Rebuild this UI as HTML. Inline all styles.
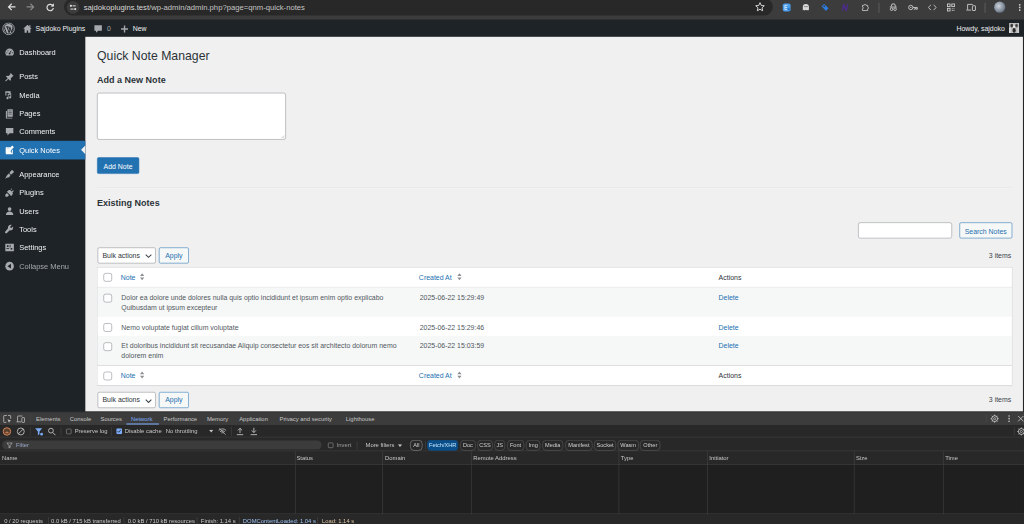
<!DOCTYPE html>
<html><head><meta charset="utf-8">
<style>
*{box-sizing:border-box}
html,body{margin:0;padding:0;width:1024px;height:524px;overflow:hidden;background:#262626}
body{font-family:"Liberation Sans",sans-serif}
#root{position:absolute;left:0;top:0;width:1920px;height:983px;transform:scale(0.533333);transform-origin:0 0;overflow:hidden}
/* chrome toolbar */
#chrome{position:absolute;left:0;top:0;width:1920px;height:37px;background:#3c3c3c}
#omni{position:absolute;left:120px;top:-3px;width:1328.6px;height:32px;border-radius:16px;background:#282828}
#omni .info{position:absolute;left:4.5px;top:4.5px;width:24px;height:24px;border-radius:12px;background:#3c3c3c}
#omni .url{position:absolute;left:37px;top:8.8px;font-size:14.4px;line-height:1;color:#d8d8d8;white-space:nowrap}
#omni .url span{color:#c4c4c4}
#chrome .ci{position:absolute}
#chrome .csep{position:absolute;top:5px;width:1.5px;height:19px;background:#5a5a5a}
#adminbar .ai{position:absolute}
#adminbar .at{position:absolute;top:9.9px;line-height:1;font-size:13px;white-space:nowrap}

/* wp admin bar */
#adminbar{position:absolute;left:0;top:37px;width:1920px;height:32px;background:#1d2327;color:#f0f0f1;font-size:13px}
#adminbar .it{position:absolute;top:0;height:32px;line-height:32px;white-space:nowrap}
/* sidebar */
#menu{position:absolute;left:0;top:69px;width:160px;height:703px;background:#1d2327}
#menu ul{list-style:none;margin:0;padding:12.4px 0 0;}
#menu li{position:relative;height:34.4px;}
#menu li.sep{height:11px}
#menu li .nm{position:absolute;left:36px;top:8px;font-size:14px;line-height:18px;color:#f0f0f1}
#menu li .ic{position:absolute;left:7.5px;top:7px}
#menu li.cur{background:#2271b1}
#menu li.cur .nm{color:#fff}
#menu li.cur:after{content:"";position:absolute;right:0;top:9px;border:8px solid transparent;border-right-color:#f0f0f1}
#menu li.col .nm{color:#a7aaad}
/* content */
#content{position:absolute;left:160px;top:69px;width:1758px;height:703px;background:#f0f0f1;color:#3c434a;font-size:13px;line-height:18.2px}
.wrap{position:absolute;left:22px;top:10px;width:1718px}
h1{font-size:23px;font-weight:400;margin:0;padding:9px 0 4px;line-height:29.9px;color:#1d2327}
h2{font-size:16.9px;font-weight:600;margin:16.9px 0;line-height:18.2px;color:#1d2327}

.t{position:absolute;white-space:nowrap;line-height:1;color:#3c434a}
.ta{position:absolute;background:#fff;border:1px solid #8c8f94;border-radius:4px}
.btnp{position:absolute;background:#2271b1;border:1px solid #2271b1;border-radius:3px;color:#fff;font-size:13px;text-align:center;line-height:28.7px;padding-top:3.2px}
.btns{position:absolute;background:#f6f7f7;border:1px solid #2271b1;border-radius:3px;color:#2271b1;font-size:13px;text-align:center;line-height:28px}
.inp{position:absolute;background:#fff;border:1px solid #8c8f94;border-radius:4px}
.sel{position:absolute;background:#fff;border:1px solid #8c8f94;border-radius:3px;color:#2c3338;font-size:13px}
.sel span{position:absolute;left:8px;top:7px;line-height:1;white-space:nowrap}
.tbl{position:absolute;background:#fff;border:1px solid #c3c4c7;box-shadow:0 1px 1px rgba(0,0,0,.04)}
.tbl .row{position:absolute;left:0;width:100%}
.tbl .hl{position:absolute;left:0;width:100%;height:1px;background:#c3c4c7}
.tbl .cb{position:absolute;width:16px;height:16px;border:1.4px solid #80848a;border-radius:4px;background:#fff}
.tbl .tt{position:absolute;font-size:13px;line-height:18.6px;color:#50575e;white-space:nowrap}
.tbl .tt.nt{white-space:normal;width:540px}
.tbl .lk{color:#2271b1}
.tbl .srt{position:absolute}
/* devtools */
#dev{position:absolute;left:0;top:771.6px;width:1920px;height:212px;background:#1f1f1f;color:#c7c7c7}
#dev .dr{position:absolute;left:0;width:100%}
#dev .dt{position:absolute;line-height:1;white-space:nowrap}
#dev .ds{position:absolute;width:1px}
#dev .di{position:absolute}
#dev .dcb{position:absolute;width:10px;height:10px;border:1.4px solid #9e9e9e;border-radius:2px}
#dev .chip{position:absolute;top:53.8px;height:20px;border:1.5px solid #5e5e5e;border-radius:7px;color:#d0d0d0;font-size:10.5px;line-height:19px;text-align:center;white-space:nowrap}
#dev .chip.sel2{background:#0b4f8a;border-color:#0b4f8a;color:#c2e7ff}
#dev .chip.all{border-color:#9a9a9a}

</style></head>
<body><div id="root">
<div id="chrome">
<svg class="ci" style="left:12px;top:4px" width="20" height="18" viewBox="0 0 20 18"><path d="M17 9H4M10 3L4 9l6 6" fill="none" stroke="#e3e3e3" stroke-width="2.2"/></svg>
<svg class="ci" style="left:47px;top:4px" width="20" height="18" viewBox="0 0 20 18"><path d="M3 9h13M10 3l6 6-6 6" fill="none" stroke="#8a8a8a" stroke-width="2.2"/></svg>
<svg class="ci" style="left:84px;top:3px" width="20" height="20" viewBox="0 0 20 20"><path d="M15.5 8.5A6 6 0 1 0 16 12" fill="none" stroke="#e3e3e3" stroke-width="2.2"/><path d="M17 3v6h-6z" fill="#e3e3e3"/></svg>
<div id="omni"><div class="info"><svg width="24" height="24" viewBox="0 0 24 24" style="position:absolute;left:0;top:0"><circle cx="8" cy="9" r="2" fill="#e3e3e3"/><path d="M11 9h6M7 15h6" stroke="#e3e3e3" stroke-width="1.8"/><circle cx="16" cy="15" r="2" fill="#e3e3e3"/></svg></div>
<div class="url">sajdokoplugins.test<span>/wp-admin/admin.php?page=qnm-quick-notes</span></div>
<svg style="position:absolute;left:1295px;top:6px" width="20" height="20" viewBox="0 0 20 20"><path d="M10 2l2.4 5.2 5.6.6-4.2 3.8 1.2 5.6L10 14.3 5 17.2l1.2-5.6L2 7.8l5.6-.6z" fill="none" stroke="#e3e3e3" stroke-width="1.7" stroke-linejoin="round"/></svg>
</div>
<svg class="ci" style="left:1466px;top:4.5px" width="18" height="18" viewBox="0 0 22 22"><rect x="2" y="2" width="18" height="18" rx="4" fill="#4a9be8"/><path d="M7 6h6M7 11h5M7 16h6M7 6v10" stroke="#d8ecff" stroke-width="2"/><circle cx="16" cy="15" r="3" fill="#2a78c8"/></svg>
<svg class="ci" style="left:1502px;top:4.5px" width="18" height="18" viewBox="0 0 22 22"><path d="M4 10a7 7 0 0 1 14 0v8l-2-2-2 2-3-2-3 2-2-2-2 2z" fill="#d9d9d9"/><circle cx="9" cy="9" r="1.6" fill="#555"/><circle cx="13.5" cy="9" r="1.6" fill="#555"/></svg>
<svg class="ci" style="left:1538px;top:4.5px" width="18" height="18" viewBox="0 0 22 22"><path d="M3 8l6-5 10 10-6 6z" fill="#2b7de0"/><circle cx="9" cy="8" r="2" fill="#3c3c3c"/></svg>
<svg class="ci" style="left:1575px;top:4.5px" width="18" height="18" viewBox="0 0 22 22"><path d="M4 19L7 3h3l4 9 2-9h3l-3 16h-3l-4-9-2 9z" fill="#4b2b8c"/></svg>
<svg class="ci" style="left:1613px;top:4.5px" width="18" height="18" viewBox="0 0 22 22"><path d="M5 6h4a2 2 0 0 1 4 0h4v4a2 2 0 0 1 0 4v4H5v-4a2 2 0 0 0 0-4z" fill="none" stroke="#d0d0d0" stroke-width="1.8"/></svg>
<div class="csep" style="left:1647px"></div>
<svg class="ci" style="left:1666px;top:4.5px" width="18" height="18" viewBox="0 0 22 22"><path d="M6 9l2-6h6l2 6M3 10h16" fill="none" stroke="#d0d0d0" stroke-width="2"/><circle cx="7" cy="15" r="3" fill="none" stroke="#d0d0d0" stroke-width="2"/><circle cx="15" cy="15" r="3" fill="none" stroke="#d0d0d0" stroke-width="2"/></svg>
<svg class="ci" style="left:1702px;top:4.5px" width="19.6" height="18" viewBox="0 0 24 22"><circle cx="7" cy="11" r="5" fill="none" stroke="#d0d0d0" stroke-width="2"/><circle cx="7" cy="11" r="1.5" fill="#d0d0d0"/><path d="M12 11h10v4h-3v-2h-2v2h-3" fill="none" stroke="#d0d0d0" stroke-width="2"/></svg>
<svg class="ci" style="left:1739px;top:4.5px" width="18" height="18" viewBox="0 0 22 22"><path d="M8 5l-6 6 6 6M14 5l6 6-6 6" fill="none" stroke="#d0d0d0" stroke-width="2"/></svg>
<svg class="ci" style="left:1774px;top:4.5px" width="18" height="18" viewBox="0 0 22 22"><rect x="3" y="3" width="6" height="6" fill="none" stroke="#d0d0d0" stroke-width="2"/><rect x="13" y="3" width="6" height="6" fill="none" stroke="#d0d0d0" stroke-width="2"/><rect x="3" y="13" width="6" height="6" fill="none" stroke="#d0d0d0" stroke-width="2"/><path d="M13 13h2v2h-2zM17 17h2v2h-2zM13 17h2v2h-2zM17 13h2v2h-2z" fill="#d0d0d0"/></svg>
<svg class="ci" style="left:1811px;top:4.5px" width="19.6" height="18" viewBox="0 0 24 22"><path d="M4 16V4h12M1 17h11" fill="none" stroke="#d0d0d0" stroke-width="2"/><rect x="15" y="7" width="7" height="11" rx="1" fill="none" stroke="#d0d0d0" stroke-width="2"/></svg>
<div class="csep" style="left:1846px"></div>
<div style="position:absolute;left:1864px;top:3px;width:21px;height:21px;border-radius:50%;background:radial-gradient(circle at 40% 40%,#cfd4dc,#7f8a99 55%,#3b4150)"></div>
<svg class="ci" style="left:1907px;top:4.5px" width="10" height="18" viewBox="0 0 12 22"><circle cx="6" cy="5" r="2" fill="#d0d0d0"/><circle cx="6" cy="11" r="2" fill="#d0d0d0"/><circle cx="6" cy="17" r="2" fill="#d0d0d0"/></svg>
</div>
<div id="adminbar">
<svg class="ai" style="left:4.2px;top:4.6px" width="24" height="24" viewBox="0 0 22 22"><circle cx="11" cy="11" r="10" fill="none" stroke="#a7aaad" stroke-width="1.6"/><circle cx="11" cy="11" r="8.2" fill="#a7aaad"/><path d="M3.6 8.2l4 11M6.5 7.6h4.5M8.6 7.8l3.3 9.8 1.6-4.7-2-5.1M13.2 7.6l3.1 9.5 1.8-5.6c.5-1.8-.3-3-1.2-3.5" fill="none" stroke="#1d2327" stroke-width="1.7" stroke-linejoin="round"/></svg>
<svg class="ai" style="left:43px;top:8.5px" width="17" height="16" viewBox="0 0 17 16"><path d="M8.5 0.5L0.5 8H3v7.5h4.2V11h2.6v4.5H14V8h2.5z" fill="#a7aaad"/><rect x="12" y="1" width="2" height="4" fill="#a7aaad"/></svg>
<div class="at" style="left:66.6px">Sajdoko Plugins</div>
<svg class="ai" style="left:175.5px;top:8.5px" width="16" height="17" viewBox="0 0 16 16"><path d="M1 1h14v10H8l-4 4v-4H1z" fill="#a7aaad"/></svg>
<div class="at" style="left:200.6px;color:#a7aaad">0</div>
<svg class="ai" style="left:225.5px;top:9.5px" width="15" height="15" viewBox="0 0 15 15"><path d="M7.5 1v13M1 7.5h13" stroke="#a7aaad" stroke-width="2.6"/></svg>
<div class="at" style="left:248.8px">New</div>
<div class="at" style="left:1793.4px">Howdy, sajdoko</div>
<svg style="position:absolute;left:1891.7px;top:6.1px" width="19" height="19" viewBox="0 0 19 19"><rect width="19" height="19" fill="#bdbdbd"/><ellipse cx="5" cy="5" rx="2.5" ry="3.5" fill="#3a3a3a"/><ellipse cx="14" cy="5" rx="2.5" ry="3.5" fill="#4a4a4a"/><ellipse cx="9.5" cy="7" rx="2" ry="2" fill="#f0f0f0"/><ellipse cx="9.5" cy="14" rx="3" ry="4.5" fill="#2a2a2a"/><rect x="0" y="9" width="3" height="10" fill="#e0e0e0"/><rect x="16" y="9" width="3" height="10" fill="#d0d0d0"/></svg>
</div>
<div id="menu"><ul>
  <li><svg class="ic" width="20" height="20" viewBox="0 0 20 20"><path d="M10 3a8 8 0 0 0-8 8c0 2 .7 3.8 1.9 5.2h12.2A8 8 0 0 0 18 11a8 8 0 0 0-8-8z" fill="#a7aaad"/><path d="M10 12l3-5" stroke="#1d2327" stroke-width="1.6"/><circle cx="10" cy="12.5" r="1.8" fill="#1d2327"/><circle cx="5" cy="11" r="1" fill="#1d2327"/><circle cx="7" cy="7" r="1" fill="#1d2327"/><circle cx="15" cy="11" r="1" fill="#1d2327"/></svg><div class="nm">Dashboard</div></li>
  <li class="sep"></li>
  <li><svg class="ic" width="20" height="20" viewBox="0 0 20 20"><path d="M11.5 2.5l6 6-2 .8-3.3 3.3.3 3.4-1.5 1.5-3.3-3.3L3 18.8 1.8 17.6l4.7-4.7L3.2 9.6l1.5-1.5 3.4.3 3.3-3.3z" fill="#a7aaad"/></svg><div class="nm">Posts</div></li>
  <li><svg class="ic" width="20" height="20" viewBox="0 0 20 20"><path d="M2 3h10v5H9l-2-2H4v5H2z" fill="#a7aaad"/><path d="M13 7v7.5a2 2 0 1 1-1.5-1.9V9L8 10v6a2 2 0 1 1-1.5-1.9V8.5z" fill="#a7aaad"/></svg><div class="nm">Media</div></li>
  <li><svg class="ic" width="20" height="20" viewBox="0 0 20 20"><path d="M6 2h10v14H6z" fill="#a7aaad"/><path d="M3 5h2v13h10v1H3z" fill="#a7aaad"/><path d="M8 5h6M8 8h6M8 11h6" stroke="#1d2327" stroke-width="1"/></svg><div class="nm">Pages</div></li>
  <li><svg class="ic" width="20" height="20" viewBox="0 0 20 20"><path d="M3 3h14v10h-7l-4 4v-4H3z" fill="#a7aaad"/></svg><div class="nm">Comments</div></li>
  <li class="cur"><svg class="ic" width="20" height="20" viewBox="0 0 20 20"><path d="M3 5h9l-2 2H5v9h9v-5l2-2v9H3z" fill="#fff"/><path d="M15 2l3 3-7 7H8V9z" fill="#fff"/><path d="M3 5v11h11" fill="#fff"/><rect x="3" y="7" width="9" height="10" fill="#fff"/></svg><div class="nm">Quick Notes</div></li>
  <li class="sep"></li>
  <li><svg class="ic" width="20" height="20" viewBox="0 0 20 20"><path d="M14.5 1.5l4 4-6 5-3-3z" fill="#a7aaad"/><path d="M8.5 8.5l3 3c-1 3-3 4-5 4.5-1.5.3-3.5 1.5-4.5 2.5 1-3 1.5-5 3-6.5 1-1 2-2.5 3.5-3.5z" fill="#a7aaad"/></svg><div class="nm">Appearance</div></li>
  <li><svg class="ic" width="20" height="20" viewBox="0 0 20 20"><path d="M13 2l1.5 1.5-2.5 2.5 2 2 2.5-2.5L18 7l-2.5 2.5c1 2 .5 4-1 5.5l-1.5 1.5-8-8L6.5 7c1.5-1.5 3.5-2 5.5-1z" fill="#a7aaad"/><path d="M5 11l4 4-3 3H3l-1-1v-3z" fill="#a7aaad"/></svg><div class="nm">Plugins</div></li>
  <li><svg class="ic" width="20" height="20" viewBox="0 0 20 20"><circle cx="10" cy="6" r="3.5" fill="#a7aaad"/><path d="M3 17c0-4 3-6.5 7-6.5s7 2.5 7 6.5z" fill="#a7aaad"/></svg><div class="nm">Users</div></li>
  <li><svg class="ic" width="20" height="20" viewBox="0 0 20 20"><path d="M16.5 4.5l-3 3-2-.5-.5-2 3-3c-2-.8-4.3-.3-5.7 1.2-1.3 1.3-1.7 3.2-1.2 4.8L2 14a2 2 0 0 0 3 3l5.2-5.1c1.6.5 3.5.1 4.8-1.2 1.5-1.4 2-3.7 1.5-6.2z" fill="#a7aaad"/></svg><div class="nm">Tools</div></li>
  <li><svg class="ic" width="20" height="20" viewBox="0 0 20 20"><path d="M2 3h16v14H2z" fill="#a7aaad"/><path d="M5 6h3v3H5zM12 11h3v3h-3z" fill="#1d2327"/><path d="M11 5v5M4 12h5" stroke="#1d2327" stroke-width="1.5"/></svg><div class="nm">Settings</div></li>
  <li class="col"><svg class="ic" width="20" height="20" viewBox="0 0 20 20"><circle cx="10" cy="10" r="8" fill="#a7aaad"/><path d="M12.5 5.5v9L6 10z" fill="#1d2327"/></svg><div class="nm">Collapse Menu</div></li>
</ul></div>
<div id="content">
  <div class="t" style="left:22px;top:24px;font-size:23px;color:#2c3338">Quick Note Manager</div>
  <div class="t" style="left:22px;top:73.4px;font-size:16.9px;font-weight:700;color:#2c3338">Add a New Note</div>
  <div class="ta" style="left:22px;top:105.4px;width:353.5px;height:87.6px"><svg width="8" height="8" style="position:absolute;right:1px;bottom:1px"><path d="M7 2L2 7M7 5L5 7" stroke="#9a9a9a" stroke-width="1"/></svg></div>
  <div class="btnp" style="left:22px;top:226.3px;width:78.7px;height:30.7px">Add Note</div>
  <div style="position:absolute;left:22px;top:282px;width:1716px;height:1px;background:#dcdcde"></div>
  <div style="position:absolute;left:22px;top:283px;width:1716px;height:1px;background:#f6f7f7"></div>
  <div class="t" style="left:22px;top:305.1px;font-size:16.9px;font-weight:700;color:#2c3338">Existing Notes</div>
  <div class="inp" style="left:1449px;top:348.4px;width:176px;height:29.6px"></div>
  <div class="btns" style="left:1638.7px;top:348.4px;width:99.1px;height:30px;padding-top:1.3px">Search Notes</div>
  <div class="sel" style="left:23.2px;top:394.7px;width:108.7px;height:30.3px"><span>Bulk actions</span><svg width="13" height="8" viewBox="0 0 13 8" style="position:absolute;left:87.5px;top:11.8px"><path d="M1.2 1.5L6.5 6.6L11.8 1.5" fill="none" stroke="#3c434a" stroke-width="1.9"/></svg></div>
  <div class="btns" style="left:138px;top:394.7px;width:56px;height:30.3px">Apply</div>
  <div class="t" style="right:22px;top:402.8px;font-size:13px">3 items</div>
  <div class="tbl" style="left:22px;top:432.2px;width:1716px;height:222px">
<div class="row" style="top:0px;height:35.8px;background:#fff"></div>
<div class="cb" style="left:10.7px;top:10.1px"></div>
<div class="tt lk" style="left:43.5px;top:9.4px">Note</div>
<svg class="srt" width="9" height="14" viewBox="0 0 9 14" style="left:78.5px;top:10.2px"><path d="M4.5 0.5L8.5 5.5H0.5Z M4.5 13.5L8.5 8.5H0.5Z" fill="#8c8f94"/></svg>
<div class="tt lk" style="left:602.4px;top:9.4px">Created At</div>
<svg class="srt" width="9" height="14" viewBox="0 0 9 14" style="left:673.5px;top:10.2px"><path d="M4.5 0.5L8.5 5.5H0.5Z M4.5 13.5L8.5 8.5H0.5Z" fill="#8c8f94"/></svg>
<div class="tt" style="left:1164.4px;top:9.4px;color:#2c3338">Actions</div>
<div class="hl" style="top:35.8px"></div>
<div class="row" style="top:36.8px;height:55.4px;background:#f6f7f7"></div>
<div class="cb" style="left:10.7px;top:48.8px"></div>
<div class="tt nt" style="left:44.5px;top:47.1px">Dolor ea dolore unde dolores nulla quis optio incididunt et ipsum enim optio explicabo Quibusdam ut ipsum excepteur</div>
<div class="tt" style="left:604px;top:47.1px">2025-06-22 15:29:49</div>
<div class="tt lk" style="left:1164.4px;top:47.1px">Delete</div>
<div class="row" style="top:92.2px;height:35.2px;background:#fff"></div>
<div class="cb" style="left:10.7px;top:104.2px"></div>
<div class="tt nt" style="left:44.5px;top:102.5px">Nemo voluptate fugiat cillum voluptate</div>
<div class="tt" style="left:604px;top:102.5px">2025-06-22 15:29:46</div>
<div class="tt lk" style="left:1164.4px;top:102.5px">Delete</div>
<div class="row" style="top:127.4px;height:55.5px;background:#f6f7f7"></div>
<div class="cb" style="left:10.7px;top:139.4px"></div>
<div class="tt nt" style="left:44.5px;top:137.7px">Et doloribus incididunt sit recusandae Aliquip consectetur eos sit architecto dolorum nemo dolorem enim</div>
<div class="tt" style="left:604px;top:137.7px">2025-06-22 15:03:59</div>
<div class="tt lk" style="left:1164.4px;top:137.7px">Delete</div>
<div class="row" style="top:183.9px;height:36.1px;background:#fff"></div>
<div class="cb" style="left:10.7px;top:194.4px"></div>
<div class="tt lk" style="left:43.5px;top:193.5px">Note</div>
<svg class="srt" width="9" height="14" viewBox="0 0 9 14" style="left:78.5px;top:194.3px"><path d="M4.5 0.5L8.5 5.5H0.5Z M4.5 13.5L8.5 8.5H0.5Z" fill="#8c8f94"/></svg>
<div class="tt lk" style="left:602.4px;top:193.5px">Created At</div>
<svg class="srt" width="9" height="14" viewBox="0 0 9 14" style="left:673.5px;top:194.3px"><path d="M4.5 0.5L8.5 5.5H0.5Z M4.5 13.5L8.5 8.5H0.5Z" fill="#8c8f94"/></svg>
<div class="tt" style="left:1164.4px;top:193.5px;color:#2c3338">Actions</div>
<div class="hl" style="top:182.9px"></div>
  </div>
  <div class="sel" style="left:23.2px;top:666.2px;width:108.7px;height:30.3px"><span>Bulk actions</span><svg width="13" height="8" viewBox="0 0 13 8" style="position:absolute;left:87.5px;top:11.8px"><path d="M1.2 1.5L6.5 6.6L11.8 1.5" fill="none" stroke="#3c434a" stroke-width="1.9"/></svg></div>
  <div class="btns" style="left:138px;top:666.2px;width:56px;height:30.3px">Apply</div>
  <div class="t" style="right:22px;top:673.2px;font-size:13px">3 items</div>
</div>

<div id="dev">
<div class="dr" style="top:0;height:24.4px;background:#3c3c3c"></div>
<div class="dr" style="top:24.4px;height:23.4px;background:#282828"></div>
<div class="dr" style="top:47.8px;height:26.3px;background:#282828"></div>
<div class="dr" style="top:74.1px;height:24.9px;background:#282828"></div>
<div class="dr" style="top:99px;height:93px;background:#1f1f1f"></div>
<div class="dr" style="top:192px;height:20px;background:#282828"></div>
<div class="dr" style="top:0px;height:1.5px;background:#2a2a2a"></div>
<div class="dr" style="top:23.4px;height:1.5px;background:#4d4d4d"></div>
<div class="dr" style="top:47.3px;height:1px;background:#474747"></div>
<div class="dr" style="top:73.6px;height:1px;background:#474747"></div>
<div class="dr" style="top:98.5px;height:1px;background:#474747"></div>
<div class="dr" style="top:191.5px;height:1px;background:#474747"></div>
<div class="dt" style="left:67.5px;top:8.8px;font-size:11px;color:#c7c7c7">Elements</div>
<div class="dt" style="left:130.9px;top:8.8px;font-size:11px;color:#c7c7c7">Console</div>
<div class="dt" style="left:188.4px;top:8.8px;font-size:11px;color:#c7c7c7">Sources</div>
<div class="dt" style="left:245.6px;top:8.8px;font-size:11px;color:#7cacf8">Network</div>
<div class="dt" style="left:306.6px;top:8.8px;font-size:11px;color:#c7c7c7">Performance</div>
<div class="dt" style="left:388.0px;top:8.8px;font-size:11px;color:#c7c7c7">Memory</div>
<div class="dt" style="left:448.5px;top:8.8px;font-size:11px;color:#c7c7c7">Application</div>
<div class="dt" style="left:524.0px;top:8.8px;font-size:11px;color:#c7c7c7">Privacy and security</div>
<div class="dt" style="left:648.4px;top:8.8px;font-size:11px;color:#c7c7c7">Lighthouse</div>
<div class="dr" style="left:236.6px;width:61.5px;top:22.4px;height:2px;background:#7cacf8"></div>
<svg class="di" style="left:5px;top:5px" width="18" height="18" viewBox="0 0 18 18"><path d="M8 2H3a1 1 0 0 0-1 1v11a1 1 0 0 0 1 1h4M15 8V3a1 1 0 0 0-1-1H10" fill="none" stroke="#c7c7c7" stroke-width="1.4"/><path d="M9 9l7 3-3 1-1 3z" fill="#c7c7c7"/></svg>
<svg class="di" style="left:30px;top:5px" width="18" height="18" viewBox="0 0 18 18"><path d="M3 14V4a1 1 0 0 1 1-1h8M1 14h9" fill="none" stroke="#c7c7c7" stroke-width="1.4"/><rect x="11" y="6" width="5" height="9" rx="1" fill="none" stroke="#c7c7c7" stroke-width="1.4"/></svg>
<div class="ds" style="left:56.0px;top:5.0px;height:15.0px;background:#4a4a4a"></div>
<div class="ds" style="left:1848.8px;top:5.0px;height:15.0px;background:#4a4a4a"></div>
<svg class="di" style="left:1856px;top:4px" width="18" height="18" viewBox="0 0 18 18"><circle cx="9" cy="9" r="5.5" fill="none" stroke="#c7c7c7" stroke-width="1.6"/><circle cx="9" cy="9" r="2" fill="none" stroke="#c7c7c7" stroke-width="1.4"/><path d="M9 1.5v2.5M9 14v2.5M1.5 9H4M14 9h2.5M3.7 3.7l1.8 1.8M12.5 12.5l1.8 1.8M3.7 14.3l1.8-1.8M12.5 5.5l1.8-1.8" stroke="#c7c7c7" stroke-width="1.6"/></svg>
<svg class="di" style="left:1886px;top:4px" width="12" height="18" viewBox="0 0 12 18"><circle cx="6" cy="4" r="1.5" fill="#c7c7c7"/><circle cx="6" cy="9" r="1.5" fill="#c7c7c7"/><circle cx="6" cy="14" r="1.5" fill="#c7c7c7"/></svg>
<svg class="di" style="left:1907px;top:6px" width="14" height="14" viewBox="0 0 14 14"><path d="M2 2L12 12M12 2L2 12" stroke="#c7c7c7" stroke-width="1.6"/></svg>
<svg class="di" style="left:4px;top:28.299999999999997px" width="18" height="18" viewBox="0 0 18 18"><circle cx="9" cy="9" r="7" fill="#5a3f30" stroke="#d98a5a" stroke-width="1.8"/><path d="M5.5 12.5a3.5 3.5 0 0 1 7 0z" fill="#c07a50"/></svg>
<svg class="di" style="left:30px;top:28.299999999999997px" width="18" height="18" viewBox="0 0 18 18"><circle cx="9" cy="9" r="6.5" fill="none" stroke="#c7c7c7" stroke-width="1.6"/><path d="M4.5 13.5L13.5 4.5" stroke="#c7c7c7" stroke-width="1.6"/></svg>
<div class="ds" style="left:56.2px;top:29.3px;height:16.0px;background:#4a4a4a"></div>
<svg class="di" style="left:64px;top:28.299999999999997px" width="18" height="18" viewBox="0 0 18 18"><path d="M2 3h13l-5 6v5l-3 2V9z" fill="#7cacf8"/><circle cx="14" cy="14" r="2.5" fill="#7cacf8"/></svg>
<svg class="di" style="left:88px;top:28.299999999999997px" width="18" height="18" viewBox="0 0 18 18"><circle cx="7.5" cy="7.5" r="4.5" fill="none" stroke="#c7c7c7" stroke-width="1.6"/><path d="M11 11l5 5" stroke="#c7c7c7" stroke-width="1.8"/></svg>
<div class="ds" style="left:113.6px;top:29.3px;height:16.0px;background:#4a4a4a"></div>
<div class="dcb" style="left:124.3px;top:32.3px"></div>
<div class="dt" style="left:140.0px;top:31.9px;font-size:11px;color:#c7c7c7">Preserve log</div>
<div class="ds" style="left:207.6px;top:29.3px;height:16.0px;background:#4a4a4a"></div>
<svg class="di" style="left:217.5px;top:31.799999999999997px" width="11" height="11" viewBox="0 0 11 11"><rect width="11" height="11" rx="2" fill="#7cacf8"/><path d="M2.5 5.5l2 2 4-4.5" fill="none" stroke="#1f1f1f" stroke-width="1.5"/></svg>
<div class="dt" style="left:234.0px;top:31.9px;font-size:11px;color:#c7c7c7">Disable cache</div>
<div class="dt" style="left:310.9px;top:31.9px;font-size:11px;color:#c7c7c7">No throttling</div>
<svg class="di" style="left:391px;top:34.3px" width="10" height="6" viewBox="0 0 10 6"><path d="M1 0h8L5 5z" fill="#c7c7c7"/></svg>
<svg class="di" style="left:408px;top:28.299999999999997px" width="18" height="18" viewBox="0 0 18 18"><path d="M2 7a10 10 0 0 1 14 0M4.5 9.5a6.5 6.5 0 0 1 9 0M7 12a3 3 0 0 1 4 0" fill="none" stroke="#c7c7c7" stroke-width="1.5"/><path d="M3 3l12 12" stroke="#c7c7c7" stroke-width="1.3"/></svg>
<div class="ds" style="left:434.0px;top:29.3px;height:16.0px;background:#4a4a4a"></div>
<svg class="di" style="left:441px;top:28.299999999999997px" width="18" height="18" viewBox="0 0 18 18"><path d="M9 12V3M5 7l4-4 4 4M3 15h12" fill="none" stroke="#c7c7c7" stroke-width="1.6"/></svg>
<svg class="di" style="left:467px;top:28.299999999999997px" width="18" height="18" viewBox="0 0 18 18"><path d="M9 2v9M5 7l4 4 4-4M3 15h12" fill="none" stroke="#c7c7c7" stroke-width="1.6"/></svg>
<div class="ds" style="left:1900.7px;top:29.3px;height:16.0px;background:#4a4a4a"></div>
<svg class="di" style="left:1906px;top:28.299999999999997px" width="18" height="18" viewBox="0 0 18 18"><circle cx="9" cy="9" r="5.5" fill="none" stroke="#c7c7c7" stroke-width="1.6"/><circle cx="9" cy="9" r="2" fill="none" stroke="#c7c7c7" stroke-width="1.4"/><path d="M9 1.5v2.5M9 14v2.5M1.5 9H4M14 9h2.5M3.7 3.7l1.8 1.8M12.5 12.5l1.8 1.8M3.7 14.3l1.8-1.8M12.5 5.5l1.8-1.8" stroke="#c7c7c7" stroke-width="1.6"/></svg>
<div class="dr" style="left:3.6px;width:599.6px;top:54.7px;height:16.7px;border-radius:9px;background:#3c3c3c"></div>
<svg class="di" style="left:12px;top:57px" width="12" height="12" viewBox="0 0 12 12"><path d="M1 1.5h10L7 6.5V10L5 11V6.5z" fill="none" stroke="#c7c7c7" stroke-width="1.2"/></svg>
<div class="dt" style="left:30.0px;top:57.7px;font-size:11px;color:#9aa8c8">Filter</div>
<div class="dcb" style="left:615px;top:58px"></div>
<div class="dt" style="left:631.3px;top:57.7px;font-size:11px;color:#9e9e9e">Invert</div>
<div class="ds" style="left:669.2px;top:55.0px;height:16.0px;background:#4a4a4a"></div>
<div class="dt" style="left:685.3px;top:57.7px;font-size:11px;color:#c7c7c7">More filters</div>
<svg class="di" style="left:745px;top:61px" width="10" height="6" viewBox="0 0 10 6"><path d="M1 0h8L5 5z" fill="#c7c7c7"/></svg>
<div class="ds" style="left:796.5px;top:55.0px;height:16.0px;background:#4a4a4a"></div>
<div class="chip all" style="left:768.75px;width:23.5px">All</div>
<div class="chip sel2" style="left:801px;width:58.0px">Fetch/XHR</div>
<div class="chip" style="left:862.5px;width:29.5px">Doc</div>
<div class="chip" style="left:895px;width:29.0px">CSS</div>
<div class="chip" style="left:927px;width:20.0px">JS</div>
<div class="chip" style="left:950.6px;width:32.1px">Font</div>
<div class="chip" style="left:985.9px;width:27.5px">Img</div>
<div class="chip" style="left:1016.6px;width:39.6px">Media</div>
<div class="chip" style="left:1059.75px;width:51.3px">Manifest</div>
<div class="chip" style="left:1114.1px;width:40.9px">Socket</div>
<div class="chip" style="left:1158px;width:39.6px">Wasm</div>
<div class="chip" style="left:1200.2px;width:38.2px">Other</div>
<div class="dt" style="left:3.6px;top:81.8px;font-size:11px;color:#c7c7c7">Name</div>
<div class="dt" style="left:555.8px;top:81.8px;font-size:11px;color:#c7c7c7">Status</div>
<div class="dt" style="left:721.9px;top:81.8px;font-size:11px;color:#c7c7c7">Domain</div>
<div class="dt" style="left:887.4px;top:81.8px;font-size:11px;color:#c7c7c7">Remote Address</div>
<div class="dt" style="left:1163.8px;top:81.8px;font-size:11px;color:#c7c7c7">Type</div>
<div class="dt" style="left:1330.0px;top:81.8px;font-size:11px;color:#c7c7c7">Initiator</div>
<div class="dt" style="left:1605.0px;top:81.8px;font-size:11px;color:#c7c7c7">Size</div>
<div class="dt" style="left:1772.2px;top:81.8px;font-size:11px;color:#c7c7c7">Time</div>
<div class="ds" style="left:552.5px;top:74.1px;height:117.9px;background:#474747"></div>
<div class="ds" style="left:717.0px;top:74.1px;height:117.9px;background:#474747"></div>
<div class="ds" style="left:883.1px;top:74.1px;height:117.9px;background:#474747"></div>
<div class="ds" style="left:1159.5px;top:74.1px;height:117.9px;background:#474747"></div>
<div class="ds" style="left:1326.4px;top:74.1px;height:117.9px;background:#474747"></div>
<div class="ds" style="left:1600.9px;top:74.1px;height:117.9px;background:#474747"></div>
<div class="ds" style="left:1767.6px;top:74.1px;height:117.9px;background:#474747"></div>
<div class="dt" style="left:7.9px;top:199.3px;font-size:11px;color:#c7c7c7">0 / 20 requests</div>
<div class="dt" style="left:95.8px;top:199.3px;font-size:11px;color:#c7c7c7">0.0 kB / 715 kB transferred</div>
<div class="dt" style="left:239.4px;top:199.3px;font-size:11px;color:#c7c7c7">0.0 kB / 710 kB resources</div>
<div class="dt" style="left:376.5px;top:199.3px;font-size:11px;color:#c7c7c7">Finish: 1.14 s</div>
<div class="dt" style="left:455.4px;top:199.3px;font-size:11px;color:#9cc0f0">DOMContentLoaded: 1.04 s</div>
<div class="dt" style="left:603.6px;top:199.3px;font-size:11px;color:#dcc3a2">Load: 1.14 s</div>
<div class="ds" style="left:90.0px;top:197.0px;height:15.0px;background:#4a4a4a"></div>
<div class="ds" style="left:231.6px;top:197.0px;height:15.0px;background:#4a4a4a"></div>
<div class="ds" style="left:369.2px;top:197.0px;height:15.0px;background:#4a4a4a"></div>
<div class="ds" style="left:448.0px;top:197.0px;height:15.0px;background:#4a4a4a"></div>
<div class="ds" style="left:595.1px;top:197.0px;height:15.0px;background:#4a4a4a"></div>
</div>
</div></body></html>
